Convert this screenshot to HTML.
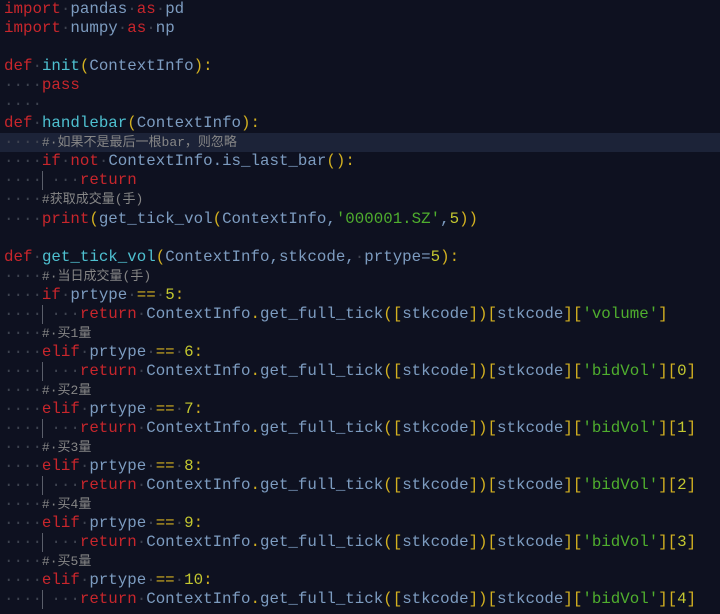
<!DOCTYPE html>
<html><head><meta charset="utf-8"><style>
html,body{margin:0;padding:0;background:#0e1120;width:720px;height:614px;overflow:hidden}
pre{margin:0;padding:0 0 0 4px;font:15.8px/19.06px "Liberation Mono","Noto Sans CJK SC",monospace;color:#7d9cc0;white-space:pre}
.l{display:block;height:19.06px}
.hl{background:#1c2338;margin-left:-4px;padding-left:4px}
b{font-weight:normal;color:#3e4350}
.k{color:#c8262c}.f{color:#4ec0d0}.p{color:#d2b020}.s{color:#4fae2e}.n{color:#c4c830}
.c{color:#868686;font-size:13px}
.g{display:inline-block;width:9.48px;border-left:1px solid #5a5e6a;height:19px;vertical-align:top;box-sizing:border-box}
</style></head><body><pre><span class="l"><span class="k">import</span><b>·</b>pandas<b>·</b><span class="k">as</span><b>·</b>pd</span><span class="l"><span class="k">import</span><b>·</b>numpy<b>·</b><span class="k">as</span><b>·</b>np</span><span class="l"></span><span class="l"><span class="k">def</span><b>·</b><span class="f">init</span><span class="p">(</span>ContextInfo<span class="p">):</span></span><span class="l"><b>····</b><span class="k">pass</span></span><span class="l"><b>····</b></span><span class="l"><span class="k">def</span><b>·</b><span class="f">handlebar</span><span class="p">(</span>ContextInfo<span class="p">):</span></span><span class="l hl"><b>····</b><span class="c">#·如果不是最后一根bar，则忽略</span></span><span class="l"><b>····</b><span class="k">if</span><b>·</b><span class="k">not</span><b>·</b>ContextInfo.is_last_bar<span class="p">():</span></span><span class="l"><b>····</b><span class="g"></span><b>···</b><span class="k">return</span></span><span class="l"><b>····</b><span class="c">#获取成交量(手)</span></span><span class="l"><b>····</b><span class="k">print</span><span class="p">(</span>get_tick_vol<span class="p">(</span>ContextInfo,<span class="s">'000001.SZ'</span>,<span class="n">5</span><span class="p">))</span></span><span class="l"></span><span class="l"><span class="k">def</span><b>·</b><span class="f">get_tick_vol</span><span class="p">(</span>ContextInfo,stkcode,<b>·</b>prtype=<span class="n">5</span><span class="p">):</span></span><span class="l"><b>····</b><span class="c">#·当日成交量(手)</span></span><span class="l"><b>····</b><span class="k">if</span><b>·</b>prtype<b>·</b><span class="p">==</span><b>·</b><span class="n">5</span><span class="p">:</span></span><span class="l"><b>····</b><span class="g"></span><b>···</b><span class="k">return</span><b>·</b>ContextInfo<span class="p">.</span>get_full_tick<span class="p">([</span>stkcode<span class="p">])[</span>stkcode<span class="p">][</span><span class="s">'volume'</span><span class="p">]</span></span><span class="l"><b>····</b><span class="c">#·买1量</span></span><span class="l"><b>····</b><span class="k">elif</span><b>·</b>prtype<b>·</b><span class="p">==</span><b>·</b><span class="n">6</span><span class="p">:</span></span><span class="l"><b>····</b><span class="g"></span><b>···</b><span class="k">return</span><b>·</b>ContextInfo<span class="p">.</span>get_full_tick<span class="p">([</span>stkcode<span class="p">])[</span>stkcode<span class="p">][</span><span class="s">'bidVol'</span><span class="p">][</span><span class="n">0</span><span class="p">]</span></span><span class="l"><b>····</b><span class="c">#·买2量</span></span><span class="l"><b>····</b><span class="k">elif</span><b>·</b>prtype<b>·</b><span class="p">==</span><b>·</b><span class="n">7</span><span class="p">:</span></span><span class="l"><b>····</b><span class="g"></span><b>···</b><span class="k">return</span><b>·</b>ContextInfo<span class="p">.</span>get_full_tick<span class="p">([</span>stkcode<span class="p">])[</span>stkcode<span class="p">][</span><span class="s">'bidVol'</span><span class="p">][</span><span class="n">1</span><span class="p">]</span></span><span class="l"><b>····</b><span class="c">#·买3量</span></span><span class="l"><b>····</b><span class="k">elif</span><b>·</b>prtype<b>·</b><span class="p">==</span><b>·</b><span class="n">8</span><span class="p">:</span></span><span class="l"><b>····</b><span class="g"></span><b>···</b><span class="k">return</span><b>·</b>ContextInfo<span class="p">.</span>get_full_tick<span class="p">([</span>stkcode<span class="p">])[</span>stkcode<span class="p">][</span><span class="s">'bidVol'</span><span class="p">][</span><span class="n">2</span><span class="p">]</span></span><span class="l"><b>····</b><span class="c">#·买4量</span></span><span class="l"><b>····</b><span class="k">elif</span><b>·</b>prtype<b>·</b><span class="p">==</span><b>·</b><span class="n">9</span><span class="p">:</span></span><span class="l"><b>····</b><span class="g"></span><b>···</b><span class="k">return</span><b>·</b>ContextInfo<span class="p">.</span>get_full_tick<span class="p">([</span>stkcode<span class="p">])[</span>stkcode<span class="p">][</span><span class="s">'bidVol'</span><span class="p">][</span><span class="n">3</span><span class="p">]</span></span><span class="l"><b>····</b><span class="c">#·买5量</span></span><span class="l"><b>····</b><span class="k">elif</span><b>·</b>prtype<b>·</b><span class="p">==</span><b>·</b><span class="n">10</span><span class="p">:</span></span><span class="l"><b>····</b><span class="g"></span><b>···</b><span class="k">return</span><b>·</b>ContextInfo<span class="p">.</span>get_full_tick<span class="p">([</span>stkcode<span class="p">])[</span>stkcode<span class="p">][</span><span class="s">'bidVol'</span><span class="p">][</span><span class="n">4</span><span class="p">]</span></span><span class="l"><b>····</b></span></pre></body></html>
